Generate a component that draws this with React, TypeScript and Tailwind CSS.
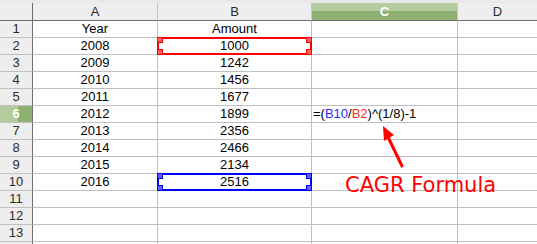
const years = [2008, 2009, 2010, 2011, 2012, 2013, 2014, 2015, 2016];
const amounts = [1000, 1242, 1456, 1677, 1899, 2356, 2466, 2134, 2516];

function Handle({ pos, color }: { pos: string; color: "red" | "blue" }) {
  const c =
    color === "red"
      ? "border-[#ff0000] bg-[#ff6060]"
      : "border-[#0000ff] bg-[#6060ff]";
  return <div className={`absolute h-[6px] w-[6px] border ${c} ${pos}`} />;
}

function Selection({ top, color }: { top: string; color: "red" | "blue" }) {
  const b = color === "red" ? "border-[#ff0000]" : "border-[#0000ff]";
  return (
    <div className={`absolute left-[157px] h-[18px] w-[155px] border-2 ${b} ${top}`}>
      <Handle pos="-left-[2px] -top-[2px]" color={color} />
      <Handle pos="-right-[2px] -top-[2px]" color={color} />
      <Handle pos="-left-[2px] -bottom-[2px]" color={color} />
      <Handle pos="-right-[2px] -bottom-[2px]" color={color} />
    </div>
  );
}

export default function App() {
  // row 14 only peeks in at the bottom edge, its label sits below the fold
  const rows = Array.from({ length: 14 }, (_, i) => i + 1);

  return (
    <div
      className="relative h-[244px] w-[537px] overflow-hidden bg-white text-[13px] text-black"
      style={{ fontFamily: '"Liberation Sans", Arial, sans-serif' }}
    >
      <div className="h-[3px] bg-[#e9e9e9]" />
      <div className="grid grid-cols-[33px_125px_154px_146px_1fr]">
        {/* column headers */}
        <div className="h-[18px] border-b border-r border-[#6e6e6e] bg-[#eeeeee]" />
        <div className="flex h-[18px] items-center justify-center border-b border-r border-b-[#6e6e6e] border-r-[#c6c6c6] bg-[#eeeeee] text-[#2c2c2c]">
          A
        </div>
        <div className="flex h-[18px] items-center justify-center border-b border-r border-b-[#6e6e6e] border-r-[#c6c6c6] bg-[#eeeeee] text-[#2c2c2c]">
          B
        </div>
        <div className="flex h-[18px] items-center justify-center border-b border-r border-b-[#6e6e6e] border-r-[#c6c6c6] bg-[linear-gradient(to_bottom,#b6cca0_0,#b6cca0_8px,#8eb072_8px,#8eb072_100%)] font-bold text-white">
          C
        </div>
        <div className="flex h-[18px] items-center justify-center border-b border-b-[#6e6e6e] bg-[#eeeeee] text-[#2c2c2c]">
          D
        </div>

        {rows.map((r) => {
          const isSel = r === 6;
          const a = r === 1 ? "Year" : r <= 10 ? String(years[r - 2]) : "";
          const b = r === 1 ? "Amount" : r <= 10 ? String(amounts[r - 2]) : "";
          return [
            <div
              key={`h${r}`}
              className={`flex h-[17px] items-center justify-center border-b border-r border-b-[#c0c0c0] border-r-[#6e6e6e] ${
                isSel
                  ? "bg-[linear-gradient(to_right,#b4cc9c_0,#b4cc9c_18px,#8eb072_18px,#8eb072_100%)] font-bold text-white"
                  : "bg-[#eeeeee] text-[#2c2c2c]"
              }`}
            >
              {r < 14 ? r : ""}
            </div>,
            <div
              key={`a${r}`}
              className="flex h-[17px] items-center justify-center border-b border-r border-[#c0c0c0]"
            >
              {a}
            </div>,
            <div
              key={`b${r}`}
              className="flex h-[17px] items-center justify-center border-b border-r border-[#c0c0c0]"
            >
              {b}
            </div>,
            <div
              key={`c${r}`}
              className="relative flex h-[17px] items-center border-b border-r border-[#c0c0c0]"
            >
              {isSel && (
                <span className="absolute left-[1px] whitespace-nowrap">
                  =(<span className="text-[#2b2bff]">B10</span>/
                  <span className="text-[#ff2b2b]">B2</span>)^(1/8)-1
                </span>
              )}
            </div>,
            <div key={`d${r}`} className="h-[17px] border-b border-[#c0c0c0]" />,
          ];
        })}
      </div>

      <Selection top="top-[37px]" color="red" />
      <Selection top="top-[173px]" color="blue" />

      <svg className="absolute left-0 top-0" width="537" height="244">
        <line x1="402" y1="166" x2="388" y2="137" stroke="#ff0000" strokeWidth="3" strokeLinecap="round" />
        <polygon points="383,126 384,141 394,135" fill="#ff0000" />
      </svg>

      <div
        className="absolute left-[345px] top-[175px] whitespace-nowrap text-[21px] leading-[21px] text-[#ff0000]"
        style={{ fontFamily: '"DejaVu Sans", sans-serif' }}
      >
        CAGR Formula
      </div>
    </div>
  );
}
